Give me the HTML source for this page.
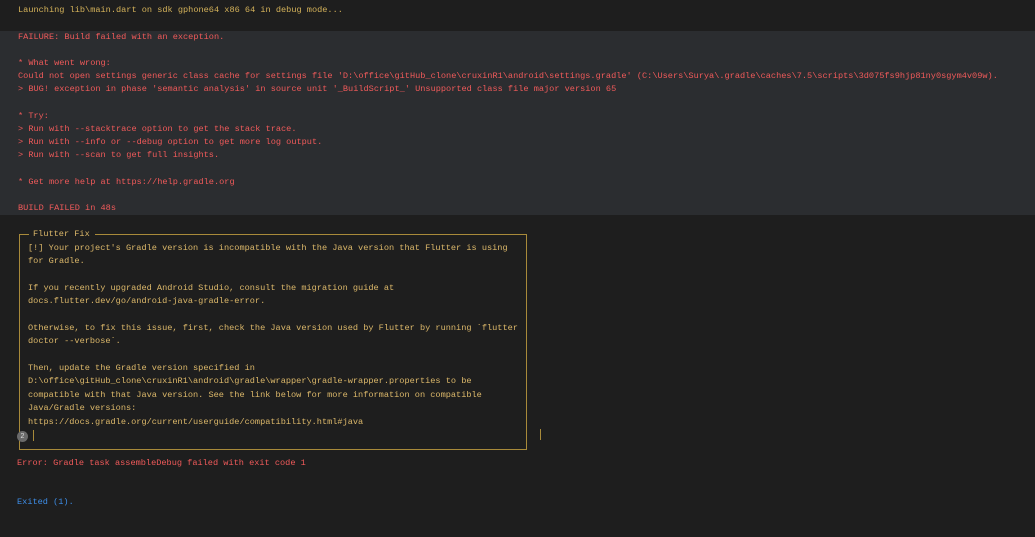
<!DOCTYPE html>
<html><head><meta charset="utf-8"><style>
html,body{margin:0;padding:0;width:1035px;height:537px;overflow:hidden;background:#1e1e1e;}
body{position:relative;font-family:"Liberation Mono",monospace;font-size:8.6px;}
.l{position:absolute;white-space:pre;line-height:12px;}
.y{color:#d4b25a}.r{color:#f05a5a}.b{color:#3d8ee8}.o{color:#dcb86a}
#band{position:absolute;left:0;top:31px;width:1035px;height:184px;background:#2b2d30;}
.bx{position:absolute;background:#a88a3a;}
</style></head><body>
<div id="band"></div>
<div class="l y" style="left:18px;top:4px">Launching lib\main.dart on sdk gphone64 x86 64 in debug mode...</div>
<div class="l r" style="left:18px;top:31px">FAILURE: Build failed with an exception.</div>
<div class="l r" style="left:18px;top:57px">* What went wrong:</div>
<div class="l r" style="left:18px;top:70px">Could not open settings generic class cache for settings file 'D:\office\gitHub_clone\cruxinR1\android\settings.gradle' (C:\Users\Surya\.gradle\caches\7.5\scripts\3d075fs9hjp81ny0sgym4v09w).</div>
<div class="l r" style="left:18px;top:83px">&gt; BUG! exception in phase 'semantic analysis' in source unit '_BuildScript_' Unsupported class file major version 65</div>
<div class="l r" style="left:18px;top:110px">* Try:</div>
<div class="l r" style="left:18px;top:123px">&gt; Run with --stacktrace option to get the stack trace.</div>
<div class="l r" style="left:18px;top:136px">&gt; Run with --info or --debug option to get more log output.</div>
<div class="l r" style="left:18px;top:149px">&gt; Run with --scan to get full insights.</div>
<div class="l r" style="left:18px;top:176px">* Get more help at https://help.gradle.org</div>
<div class="l r" style="left:18px;top:202px">BUILD FAILED in 48s</div>

<div class="bx" style="left:19px;top:234px;width:10px;height:1px"></div>
<div class="bx" style="left:95px;top:234px;width:431px;height:1px"></div>
<div class="bx" style="left:19px;top:234px;width:1px;height:216px"></div>
<div class="bx" style="left:526px;top:234px;width:1px;height:216px"></div>
<div class="bx" style="left:19px;top:449px;width:508px;height:1px"></div>
<div class="l o" style="left:33px;top:228px">Flutter Fix</div>
<div class="l o" style="left:28px;top:242px">[!] Your project's Gradle version is incompatible with the Java version that Flutter is using</div>
<div class="l o" style="left:28px;top:255px">for Gradle.</div>
<div class="l o" style="left:28px;top:282px">If you recently upgraded Android Studio, consult the migration guide at</div>
<div class="l o" style="left:28px;top:295px">docs.flutter.dev/go/android-java-gradle-error.</div>
<div class="l o" style="left:28px;top:322px">Otherwise, to fix this issue, first, check the Java version used by Flutter by running `flutter</div>
<div class="l o" style="left:28px;top:335px">doctor --verbose`.</div>
<div class="l o" style="left:28px;top:362px">Then, update the Gradle version specified in</div>
<div class="l o" style="left:28px;top:375px">D:\office\gitHub_clone\cruxinR1\android\gradle\wrapper\gradle-wrapper.properties to be</div>
<div class="l o" style="left:28px;top:389px">compatible with that Java version. See the link below for more information on compatible</div>
<div class="l o" style="left:28px;top:402px">Java/Gradle versions:</div>
<div class="l o" style="left:28px;top:416px">https://docs.gradle.org/current/userguide/compatibility.html#java</div>
<div style="position:absolute;left:17px;top:431px;width:11px;height:11px;border-radius:50%;background:#6a6a6a;color:#ddd;font-size:7px;text-align:center;line-height:11px;font-family:'Liberation Sans',sans-serif">2</div>
<div class="bx" style="left:33px;top:430px;width:1px;height:11px"></div>
<div class="bx" style="left:540px;top:429px;width:1px;height:11px"></div>
<div class="l r" style="left:17px;top:457px">Error: Gradle task assembleDebug failed with exit code 1</div>
<div class="l b" style="left:17px;top:496px">Exited (1).</div>
</body></html>
